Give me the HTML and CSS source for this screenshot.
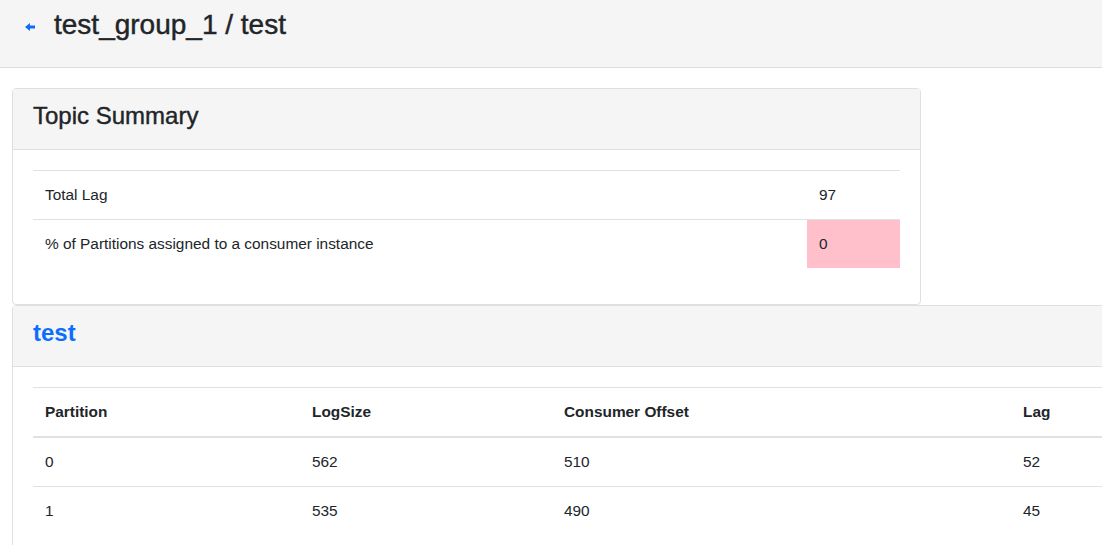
FILE: index.html
```html
<!DOCTYPE html>
<html>
<head>
<meta charset="utf-8">
<link rel="stylesheet" href="styles.css">
</head>
<body>
<header class="topbar">
  <a class="back" href="#"><svg width="10" height="8" viewBox="0 0 10 8"><polygon points="0,4 5,0 5,2.5 10,2.5 10,5.5 5,5.5 5,8" fill="#0d6efd"/></svg></a>
  <h3 class="page-title">test_group_1 / test</h3>
</header>
<main class="content">
  <section class="card card-summary">
    <div class="card-header"><h4 class="card-title">Topic Summary</h4></div>
    <div class="card-body">
      <table class="table summary">
        <tbody>
          <tr><td>Total Lag</td><td class="val">97</td></tr>
          <tr><td>% of Partitions assigned to a consumer instance</td><td class="val bad">0</td></tr>
        </tbody>
      </table>
    </div>
  </section>
  <section class="card card-topic">
    <div class="card-header"><h4 class="card-title topic-link">test</h4></div>
    <div class="card-body">
      <table class="table partitions">
        <thead>
          <tr><th class="c1">Partition</th><th class="c2">LogSize</th><th class="c3">Consumer Offset</th><th>Lag</th></tr>
        </thead>
        <tbody>
          <tr><td>0</td><td>562</td><td>510</td><td>52</td></tr>
          <tr><td>1</td><td>535</td><td>490</td><td>45</td></tr>
        </tbody>
      </table>
    </div>
  </section>
</main>
</body>
</html>
```
FILE: styles.css
```css
html, body { overflow: hidden; }
body {
  margin: 0;
  font-family: "Liberation Sans", Arial, sans-serif;
  color: #212529;
  background: #fff;
  font-size: 15.4px;
  line-height: 24px;
}
.topbar {
  background: #f5f5f5;
  border-bottom: 1px solid #dcdcdc;
  display: flex;
  align-items: flex-start;
  padding: 8px 0 0 25px;
  box-sizing: border-box;
  height: 68px;
}
.back { display: flex; margin-top: 15px; width: 29px; }
.page-title {
  margin: 0;
  font-size: 28px;
  line-height: 33.6px;
  font-weight: 500;
  -webkit-text-stroke: 0.45px #212529;
}
.content { padding: 20px 12px; }
.card {
  border: 1px solid #dfdfdf;
  border-radius: 4px;
  background: #fff;
}
.card-summary { width: 909px; box-sizing: border-box; }
.card-topic { width: 1160px; box-sizing: border-box; }
.card-header {
  background: #f5f5f5;
  border-bottom: 1px solid #dfdfdf;
  padding: 13px 20px 19px;
}
.card-title {
  margin: 0;
  font-size: 24px;
  line-height: 28px;
  font-weight: 500;
  -webkit-text-stroke: 0.4px #212529;
}
.topic-link { color: #0d6efd; font-weight: 700; -webkit-text-stroke: 0; }
.card-body { padding: 20px; }
.table {
  width: 100%;
  border-collapse: collapse;
  margin-bottom: 16px;
}
.table td, .table th {
  padding: 12px;
  border-top: 1px solid #dee2e6;
  text-align: left;
  vertical-align: top;
}
.table thead th {
  border-bottom: 2px solid #dee2e6;
  font-weight: 700;
}
.summary .val { width: 69px; }
.bad { background: #ffc0cb; }
.partitions { table-layout: fixed; }
.partitions .c1 { width: 243px; }
.partitions .c2 { width: 228px; }
.partitions .c3 { width: 435px; }
```
